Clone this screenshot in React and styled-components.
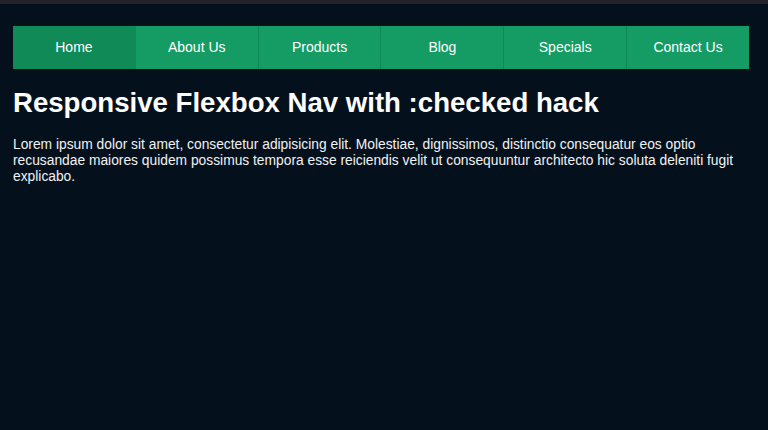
import styled, { createGlobalStyle } from 'styled-components';

const GlobalStyle = createGlobalStyle`
  html, body {
    margin: 0;
    padding: 0;
    background: #04111d;
    font-family: "Liberation Sans", Arial, sans-serif;
    color: #fff;
  }
`;

const TopStrip = styled.div`
  height: 4px;
  background: #232329;
`;

const Page = styled.div`
  padding: 22px 19px 0 13px;
`;

const Nav = styled.nav`
  display: flex;
  background: #149c64;
`;

const NavItem = styled.a`
  flex: 1;
  display: flex;
  align-items: center;
  justify-content: center;
  height: 43px;
  padding-bottom: 1px;
  box-sizing: border-box;
  font-size: 14px;
  color: #fff;
  text-decoration: none;
  background: ${(p) => (p.$active ? '#108a56' : 'transparent')};
  border-left: ${(p) => (p.$first ? 'none' : '1px solid #0e8a52')};
`;

const Title = styled.h1`
  font-size: 27.6px;
  font-weight: bold;
  margin: 18px 0 18px;
`;

const Text = styled.p`
  font-size: 13.8px;
  line-height: 16px;
  margin: 0;
  color: #f2f2f2;
`;

const links = ['Home', 'About Us', 'Products', 'Blog', 'Specials', 'Contact Us'];

export default function App() {
  return (
    <>
      <GlobalStyle />
      <TopStrip />
      <Page>
        <Nav>
          {links.map((l, i) => (
            <NavItem key={l} href="#" $active={i === 0} $first={i === 0}>
              {l}
            </NavItem>
          ))}
        </Nav>
        <Title>Responsive Flexbox Nav with :checked hack</Title>
        <Text>
          Lorem ipsum dolor sit amet, consectetur adipisicing elit. Molestiae, dignissimos, distinctio consequatur eos optio
          recusandae maiores quidem possimus tempora esse reiciendis velit ut consequuntur architecto hic soluta deleniti fugit
          explicabo.
        </Text>
      </Page>
    </>
  );
}
